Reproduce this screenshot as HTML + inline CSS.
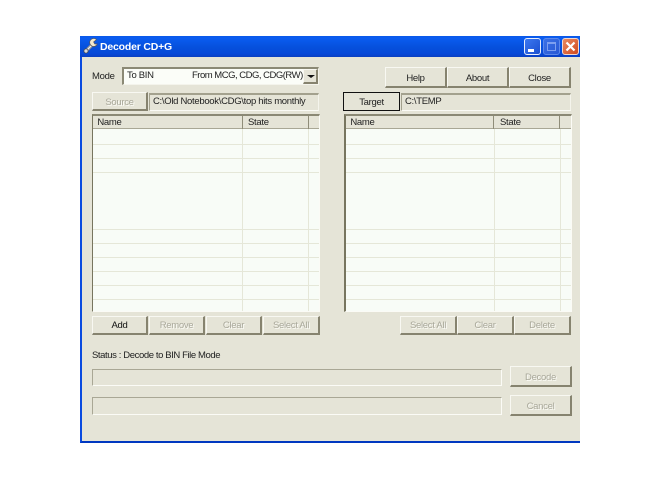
<!DOCTYPE html>
<html>
<head>
<meta charset="utf-8">
<style>
html,body{margin:0;padding:0;width:660px;height:480px;background:#fff;overflow:hidden}
body{position:relative;font-family:"Liberation Sans",sans-serif;font-size:9.5px;letter-spacing:-.3px;color:#222}
div{position:absolute;box-sizing:border-box}
.t{white-space:nowrap;line-height:12px;filter:blur(.3px)}
.btn{background:#e5e4d7;border-top:1px solid #f8f8f2;border-left:1px solid #f8f8f2;border-right:2px solid #86836f;border-bottom:2px solid #86836f;text-align:center;white-space:nowrap;line-height:18px;color:#222}
.tall{line-height:21px}
.dis{color:#a9a89a;text-shadow:1px 1px 0 #fbfbf6}
.path{background:#e5e4d7;border-top:2px solid #a3a18e;border-left:1px solid #a3a18e;border-bottom:1px solid #fbfbf6;border-right:1px solid #f4f4ec;padding-left:3px;line-height:13px;white-space:nowrap}
.list{background:#f8fcf7;border-top:2px solid #8b8975;border-left:2px solid #77755f;border-bottom:1px solid #fbfbf6;border-right:1px solid #fbfbf6}
.hd{background:#e5e4d7;height:13px;top:0;left:0;right:0;border-bottom:1px solid #a9a795;line-height:13px;padding-left:2px;white-space:nowrap}
.r{left:0;right:0;height:1px;background:#e5e7d8}
.c{top:13px;bottom:0;width:1px;background:#e5e7d8}
.s{top:0;height:13px;width:1px;background:#8f8d79}
.bar{background:#e5e4d7;border-top:1px solid #a9a795;border-left:1px solid #a9a795;border-bottom:1px solid #fbfbf6;border-right:1px solid #fbfbf6}
</style>
</head>
<body>
<!-- window -->
<div style="left:80px;top:36px;width:500px;height:407px;background:#e5e4d7;border-left:2px solid #0a4be0;border-bottom:2px solid #0038c0"></div>
<div style="left:80px;top:36px;width:500px;height:21px;background:linear-gradient(#0a58e8 0,#0a5cf0 10%,#0650dc 55%,#0648d8 85%,#0a3fc0 100%)"></div>

<!-- title -->
<svg style="position:absolute;left:83px;top:38px" width="16" height="16" viewBox="0 0 16 16">
<path d="M3 13 L9 7" stroke="#8a8f98" stroke-width="3.4" stroke-linecap="round" fill="none"/>
<path d="M3 13 L8.5 7.5" stroke="#eef0f2" stroke-width="1.2" stroke-linecap="round" fill="none"/>
<path d="M13.5 1.6 A4 4 0 1 0 14.4 6 L11.8 6 L10.6 4 Z" fill="#f2ead0" stroke="#57565a" stroke-width=".7"/>
<circle cx="3" cy="13" r="2.1" fill="#d8dade" stroke="#44464c" stroke-width=".8"/>
</svg>
<div class="t" style="left:100px;top:40px;color:#fff;font-weight:bold;font-size:10.5px;letter-spacing:-.2px;line-height:14px">Decoder CD+G</div>

<!-- caption buttons -->
<div style="left:524px;top:38px;width:17px;height:17px;border:1px solid #e8eefc;border-radius:3px;background:linear-gradient(135deg,#3c78f0,#1a4fd0)"></div>
<div style="left:528px;top:49px;width:6px;height:3px;background:#fff"></div>
<div style="left:543px;top:38px;width:17px;height:17px;border:1px solid #5d88ea;border-radius:3px;background:linear-gradient(135deg,#3a70e6,#2858d4)"></div>
<div style="left:547px;top:42px;width:9px;height:9px;border:1px solid #7d9ff0;border-top:2px solid #7d9ff0"></div>
<div style="left:562px;top:38px;width:17px;height:17px;border:1px solid #f0d8d0;border-radius:3px;background:linear-gradient(135deg,#ea8a60,#d04a20)"></div>
<svg style="position:absolute;left:562px;top:38px" width="17" height="17"><path d="M4.5 4.5 L12.5 12.5 M12.5 4.5 L4.5 12.5" stroke="#fff" stroke-width="2.2"/></svg>

<!-- mode -->
<div class="t" style="left:92px;top:71px">Mode</div>
<div style="left:122px;top:67px;width:197px;height:18px;background:#fbfdf8;border-top:2px solid #8b8975;border-left:2px solid #8b8975;border-bottom:1px solid #f4f4ec;border-right:1px solid #f4f4ec"></div>
<div class="t" style="left:127px;top:70px">To BIN</div>
<div class="t" style="left:192px;top:70px;letter-spacing:-.5px">From MCG, CDG, CDG(RW)</div>
<div class="btn" style="left:303px;top:69px;width:15px;height:15px"></div>
<div style="left:307px;top:75px;width:0;height:0;border-left:4px solid transparent;border-right:4px solid transparent;border-top:3px solid #111"></div>

<!-- top right buttons -->
<div class="btn tall" style="left:385px;top:67px;width:62px;height:21px">Help</div>
<div class="btn tall" style="left:447px;top:67px;width:62px;height:21px">About</div>
<div class="btn tall" style="left:509px;top:67px;width:62px;height:21px">Close</div>

<!-- source -->
<div class="btn dis" style="left:92px;top:92px;width:56px;height:19px;line-height:19px">Source</div>
<div class="path" style="left:149px;top:93px;width:170px;height:18px">C:\Old Notebook\CDG\top hits monthly</div>

<!-- target -->
<div class="btn" style="left:343px;top:92px;width:57px;height:19px;border:1px solid #111;line-height:19px">Target</div>
<div class="path" style="left:401px;top:93px;width:170px;height:18px">C:\TEMP</div>

<!-- left list -->
<div class="list" style="left:92px;top:114px;width:228px;height:198px;border-left-width:1px">
  <div class="hd">&nbsp;Name</div>
  <div class="s" style="left:149px"></div>
  <div class="t" style="left:155px;top:1px">State</div>
  <div class="s" style="left:215px"></div>
  <div class="c" style="left:149px"></div>
  <div class="c" style="left:215px"></div>
  <div class="r" style="top:28px"></div>
  <div class="r" style="top:42px"></div>
  <div class="r" style="top:56px"></div>
  <div class="r" style="top:113px"></div>
  <div class="r" style="top:127px"></div>
  <div class="r" style="top:141px"></div>
  <div class="r" style="top:155px"></div>
  <div class="r" style="top:169px"></div>
  <div class="r" style="top:183px"></div>
</div>

<!-- right list -->
<div class="list" style="left:344px;top:114px;width:228px;height:198px">
  <div class="hd">&nbsp;Name</div>
  <div class="s" style="left:147px"></div>
  <div class="t" style="left:154px;top:1px">State</div>
  <div class="s" style="left:213px"></div>
  <div class="c" style="left:148px"></div>
  <div class="c" style="left:214px"></div>
  <div class="r" style="top:28px"></div>
  <div class="r" style="top:42px"></div>
  <div class="r" style="top:56px"></div>
  <div class="r" style="top:113px"></div>
  <div class="r" style="top:127px"></div>
  <div class="r" style="top:141px"></div>
  <div class="r" style="top:155px"></div>
  <div class="r" style="top:169px"></div>
  <div class="r" style="top:183px"></div>
</div>

<!-- left buttons -->
<div class="btn" style="left:92px;top:316px;width:56px;height:19px;color:#111">Add</div>
<div class="btn dis" style="left:149px;top:316px;width:56px;height:19px">Remove</div>
<div class="btn dis" style="left:206px;top:316px;width:56px;height:19px">Clear</div>
<div class="btn dis" style="left:263px;top:316px;width:57px;height:19px">Select All</div>

<!-- right buttons -->
<div class="btn dis" style="left:400px;top:316px;width:57px;height:19px">Select All</div>
<div class="btn dis" style="left:457px;top:316px;width:57px;height:19px">Clear</div>
<div class="btn dis" style="left:514px;top:316px;width:57px;height:19px">Delete</div>

<!-- status -->
<div class="t" style="left:92px;top:350px;letter-spacing:-.4px">Status : Decode to BIN File Mode</div>
<div class="bar" style="left:92px;top:369px;width:410px;height:17px"></div>
<div class="bar" style="left:92px;top:397px;width:410px;height:18px"></div>
<div class="btn dis tall" style="left:510px;top:366px;width:62px;height:21px">Decode</div>
<div class="btn dis tall" style="left:510px;top:395px;width:62px;height:21px">Cancel</div>
</body>
</html>
